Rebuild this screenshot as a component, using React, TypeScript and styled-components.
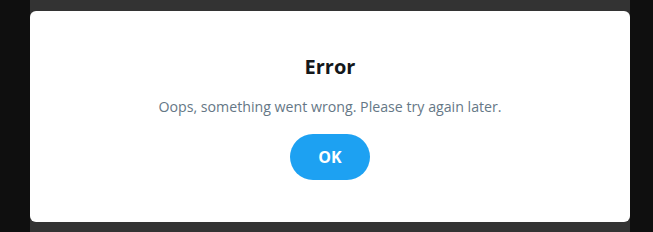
import styled, { createGlobalStyle } from 'styled-components'

const GlobalStyle = createGlobalStyle`
  body {
    margin: 0;
    background: #0f0f0f;
    font-family: "Open Sans", "Liberation Sans", sans-serif;
  }
`

const Column = styled.div`
  width: 600px;
  margin-left: 30px;
  height: 232px;
  box-sizing: border-box;
  background: #333333;
  padding-top: 11px;
`

const Modal = styled.div`
  height: 211px;
  box-sizing: border-box;
  background: #ffffff;
  border-radius: 6px;
  padding-top: 44px;
  display: flex;
  flex-direction: column;
  align-items: center;
`

const Title = styled.h2`
  margin: 0;
  font-size: 20px;
  line-height: 24px;
  font-weight: 700;
  color: #14171a;
`

const Message = styled.p`
  margin: 18px 0 0;
  font-size: 14.2px;
  line-height: 20px;
  color: #657786;
`

const Button = styled.button`
  margin-top: 17px;
  width: 80px;
  height: 46px;
  border: none;
  border-radius: 23px;
  background: #1da1f2;
  color: #ffffff;
  font-family: inherit;
  font-size: 16px;
  font-weight: 700;
  cursor: pointer;
`

export default function App() {
  return (
    <>
      <GlobalStyle />
      <Column>
        <Modal>
          <Title>Error</Title>
          <Message>Oops, something went wrong. Please try again later.</Message>
          <Button>OK</Button>
        </Modal>
      </Column>
    </>
  )
}
